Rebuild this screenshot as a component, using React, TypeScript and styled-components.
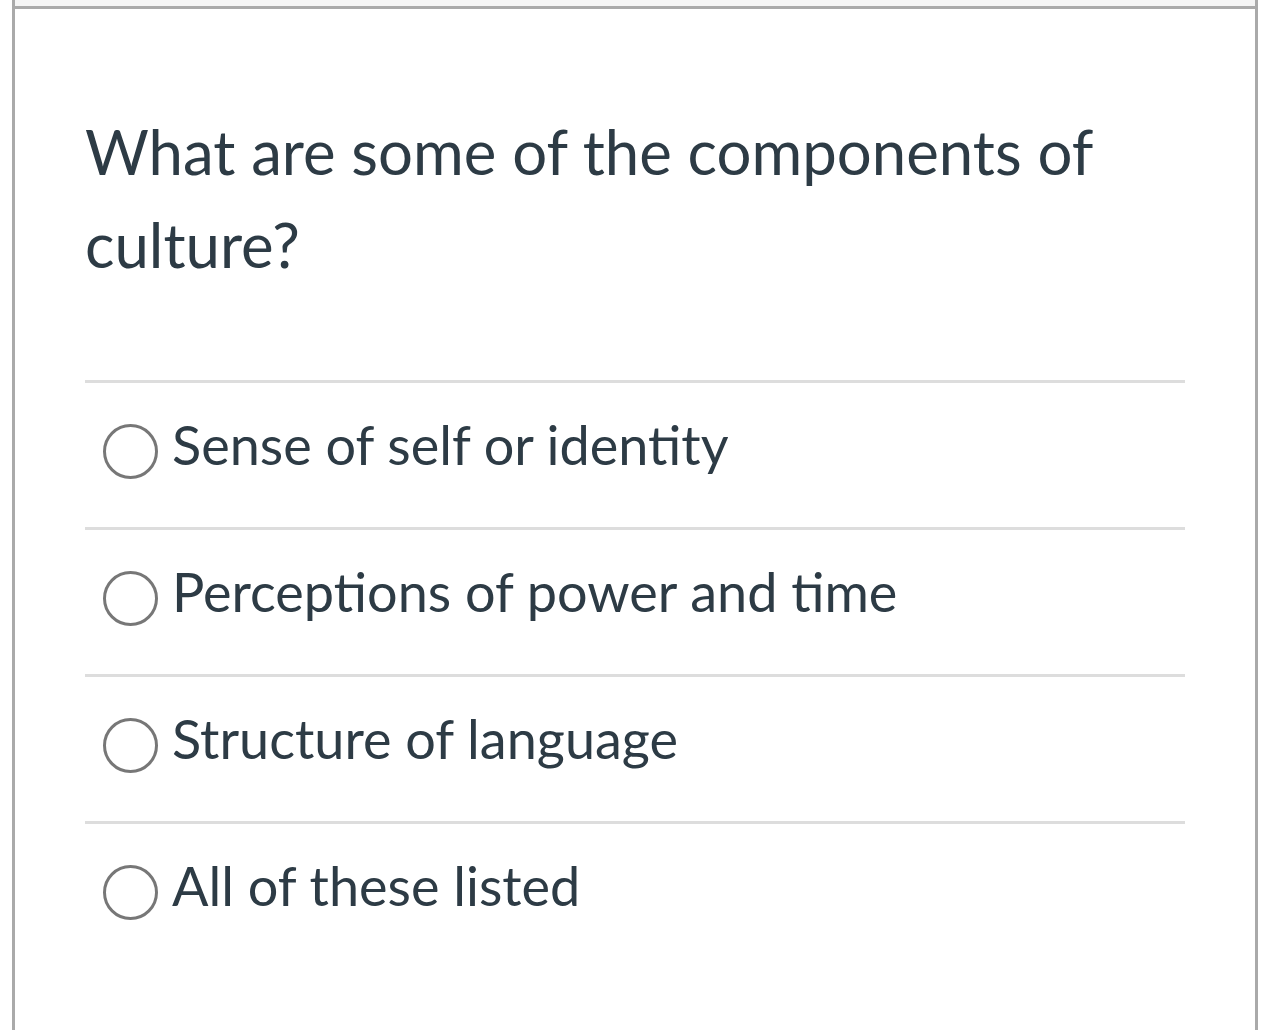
import * as React from "react";
import styled, { createGlobalStyle } from "styled-components";

const GlobalStyle = createGlobalStyle`
	html, body {
		margin: 0;
		padding: 0;
		background: #ffffff;
	}
	body {
		font-family: Lato, "Liberation Sans", sans-serif;
		color: #2d3b45;
	}
`;

const options = [
	"Sense of self or identity",
	"Perceptions of power and time",
	"Structure of language",
	"All of these listed",
];

const App = () => {
	const [selected, setSelected] = React.useState<number | null>(null);

	return (
		<Page>
			<GlobalStyle />
			<Card>
				<CardHeader />
				<CardBody>
					<Question>What are some of the components of culture?</Question>
					<Answers>
						{options.map((label, i) => (
							<Answer key={label} onClick={() => setSelected(i)}>
								<Radio checked={selected === i} />
								<AnswerText>{label}</AnswerText>
							</Answer>
						))}
					</Answers>
				</CardBody>
			</Card>
		</Page>
	);
};

const Page = styled.div`
	padding: 0 28px 0 12px;
	min-height: 1030px;
	box-sizing: border-box;
`;

const Card = styled.div`
	border-left: 3px solid #aaaaaa;
	border-right: 3px solid #aaaaaa;
	min-height: 1030px;
`;

const CardHeader = styled.div`
	height: 6px;
	background: #f5f5f5;
	border-bottom: 3px solid #aaaaaa;
`;

const CardBody = styled.div`
	padding: 96px 70px 0;
`;

const Question = styled.div`
	font-size: 61.7px;
	line-height: 93px;
	margin: 0 0 89px;
`;

const Answers = styled.div`
	display: flex;
	flex-direction: column;
`;

const Answer = styled.div`
	display: flex;
	align-items: flex-start;
	gap: 14px;
	border-top: 3px solid #dddddd;
	padding: 29px 0 48px 18px;
	cursor: pointer;
`;

const Radio = styled.span<{ checked: boolean }>`
	flex: none;
	width: 55px;
	height: 55px;
	margin-top: 12px;
	box-sizing: border-box;
	border-radius: 50%;
	border: 3px solid #777777;
	background: ${({ checked }) =>
		checked ? "radial-gradient(circle, #2d3b45 0 12px, #fff 13px)" : "#fff"};
`;

const AnswerText = styled.span`
	font-size: 54px;
	line-height: 65px;
`;

export default App;
